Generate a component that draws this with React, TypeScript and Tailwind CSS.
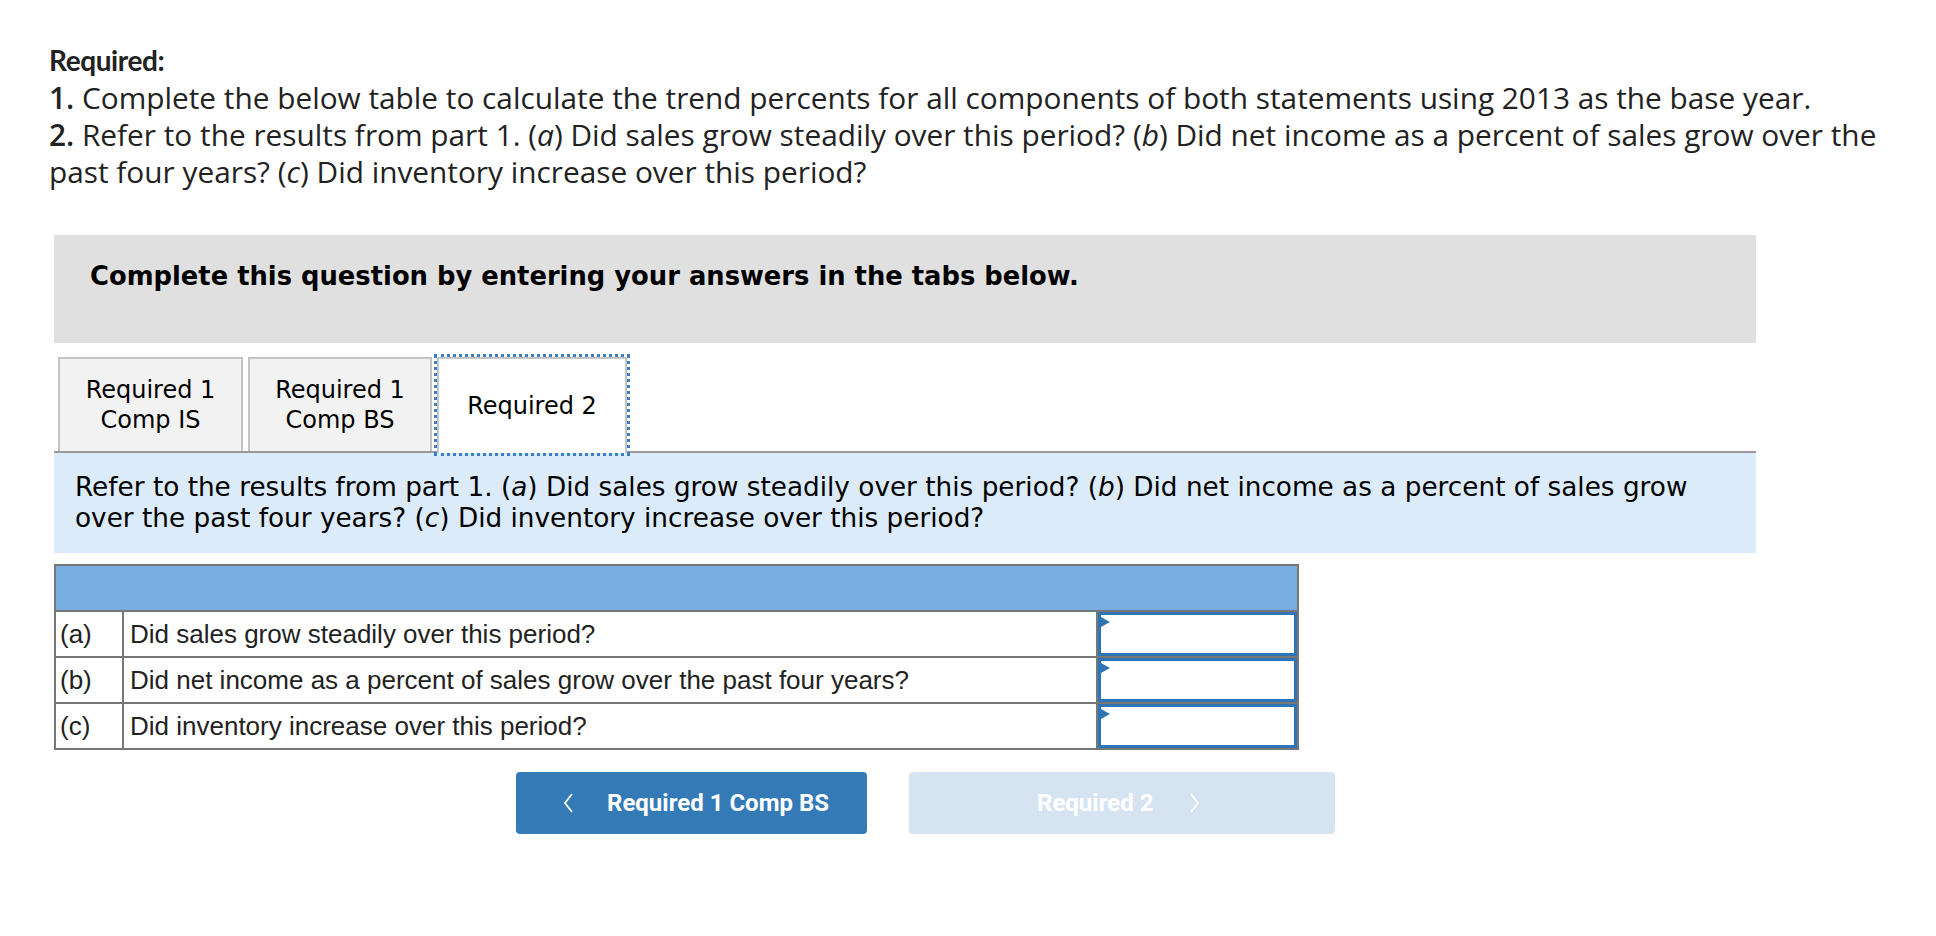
const rows = [
  { key: '(a)', text: 'Did sales grow steadily over this period?' },
  { key: '(b)', text: 'Did net income as a percent of sales grow over the past four years?' },
  { key: '(c)', text: 'Did inventory increase over this period?' },
];

const Chevron = ({ dir }: { dir: 'left' | 'right' }) => (
  <svg width="12" height="22" viewBox="0 0 12 22" fill="none" stroke="currentColor" strokeWidth="1.8">
    {dir === 'left' ? <path d="M10 2 L3 11 L10 20" /> : <path d="M2 2 L9 11 L2 20" />}
  </svg>
);

const App = () => {
  return (
    <div className="min-h-screen bg-white pl-[49px] pt-[42px] text-[#222]">
      {/* Question prompt */}
      <div className="font-['Open_Sans',sans-serif] text-[29.8px] leading-[37px]">
        <div className="font-['Lato',sans-serif] text-[28px] font-bold tracking-[-0.4px]">Required:</div>
        <div>
          <b className="font-semibold">1.</b> Complete the below table to calculate the trend percents for all
          components of both statements using 2013 as the base year.
        </div>
        <div>
          <b className="font-semibold">2.</b> Refer to the results from part 1. (<i>a</i>) Did sales grow steadily
          over this period? (<i>b</i>) Did net income as a percent of sales grow over the
          <br />
          past four years? (<i>c</i>) Did inventory increase over this period?
        </div>
      </div>

      <div className="ml-[5px] mt-[45px] w-[1702px]">
        <div className="flex h-[108px] items-center bg-[#e0e0e0] pb-[26px] pl-[36px] font-['DejaVu_Sans',sans-serif] text-[25.8px] font-bold text-black">
          Complete this question by entering your answers in the tabs below.
        </div>

        {/* Tabs */}
        <div className="mt-[14px] flex gap-[5px] border-b-2 border-[#9a9a9a] pl-[4px] font-['DejaVu_Sans',sans-serif] text-[24px] leading-[30px] text-black">
          <div className="flex h-[94px] w-[185px] items-center justify-center border-2 border-b-0 border-[#c4c4c4] bg-[#f2f2f2] text-center">
            Required 1<br />Comp IS
          </div>
          <div className="flex h-[94px] w-[184px] items-center justify-center border-2 border-b-0 border-[#c4c4c4] bg-[#f2f2f2] text-center">
            Required 1<br />Comp BS
          </div>
          <div className="relative -mb-[2px] flex h-[96px] w-[190px] items-center justify-center border-2 border-b-0 border-[#c4c4c4] bg-white outline-[3px] outline-dotted outline-[#3a7fc4]">
            Required 2
          </div>
        </div>

        <div className="bg-[#dbebf9] px-[21px] pb-[19px] pt-[19px] font-['DejaVu_Sans',sans-serif] text-[26.3px] leading-[31px] text-black">
          Refer to the results from part 1. (<i>a</i>) Did sales grow steadily over this period? (<i>b</i>) Did net
          income as a percent of sales grow
          <br />
          over the past four years? (<i>c</i>) Did inventory increase over this period?
        </div>

        {/* Answer table */}
        <table className="mt-[11px] w-[1245px] border-collapse font-['Liberation_Sans',Arial,sans-serif] text-[26px] text-[#222]">
          <tbody>
            <tr className="h-[46px] bg-[#76aee2]">
              <td colSpan={3} className="border-2 border-[#777]"></td>
            </tr>
            {rows.map((r) => (
              <tr key={r.key} className="h-[46px]">
                <td className="w-[68px] border-2 border-[#777] pl-[4px]">{r.key}</td>
                <td className="border-2 border-[#777] pl-[6px]">{r.text}</td>
                <td className="w-[201px] border-2 border-[#777] p-0">
                  <div className="relative h-[44px] border-[3px] border-[#2f75b5] bg-white">
                    <span className="absolute left-0 top-[2px] h-0 w-0 border-y-[5px] border-l-[9px] border-y-transparent border-l-[#2f75b5]" />
                  </div>
                </td>
              </tr>
            ))}
          </tbody>
        </table>

        {/* Navigation */}
        <div className="mt-[22px] flex gap-[42px] pl-[462px] font-['Roboto',sans-serif] text-[24px] font-bold text-white">
          <button className="flex h-[62px] w-[351px] items-center rounded-[4px] bg-[#337ab7] pl-[46px]">
            <Chevron dir="left" />
            <span className="ml-[33px]">Required 1 Comp BS</span>
          </button>
          <button className="flex h-[62px] w-[426px] items-center rounded-[4px] bg-[#d6e4f1] pl-[128px]">
            <span>Required 2</span>
            <span className="ml-[36px]">
              <Chevron dir="right" />
            </span>
          </button>
        </div>
      </div>
    </div>
  );
};

export default App;
